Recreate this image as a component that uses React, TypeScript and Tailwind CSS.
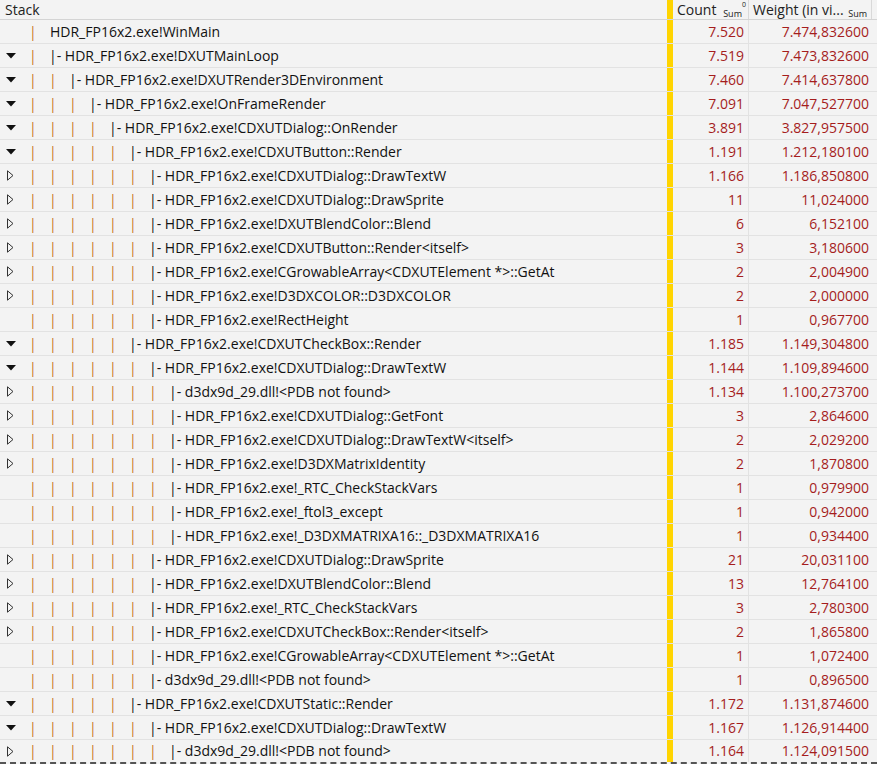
type Arrow = 'down' | 'right' | null;

type Row = {
  arrow: Arrow;
  level: number;
  name: string;
  count: string;
  weight: string;
};

const rows: Row[] = [
  { arrow: null, level: 0, name: 'HDR_FP16x2.exe!WinMain', count: '7.520', weight: '7.474,832600' },
  { arrow: 'down', level: 1, name: 'HDR_FP16x2.exe!DXUTMainLoop', count: '7.519', weight: '7.473,832600' },
  { arrow: 'down', level: 2, name: 'HDR_FP16x2.exe!DXUTRender3DEnvironment', count: '7.460', weight: '7.414,637800' },
  { arrow: 'down', level: 3, name: 'HDR_FP16x2.exe!OnFrameRender', count: '7.091', weight: '7.047,527700' },
  { arrow: 'down', level: 4, name: 'HDR_FP16x2.exe!CDXUTDialog::OnRender', count: '3.891', weight: '3.827,957500' },
  { arrow: 'down', level: 5, name: 'HDR_FP16x2.exe!CDXUTButton::Render', count: '1.191', weight: '1.212,180100' },
  { arrow: 'right', level: 6, name: 'HDR_FP16x2.exe!CDXUTDialog::DrawTextW', count: '1.166', weight: '1.186,850800' },
  { arrow: 'right', level: 6, name: 'HDR_FP16x2.exe!CDXUTDialog::DrawSprite', count: '11', weight: '11,024000' },
  { arrow: 'right', level: 6, name: 'HDR_FP16x2.exe!DXUTBlendColor::Blend', count: '6', weight: '6,152100' },
  { arrow: 'right', level: 6, name: 'HDR_FP16x2.exe!CDXUTButton::Render<itself>', count: '3', weight: '3,180600' },
  { arrow: 'right', level: 6, name: 'HDR_FP16x2.exe!CGrowableArray<CDXUTElement *>::GetAt', count: '2', weight: '2,004900' },
  { arrow: 'right', level: 6, name: 'HDR_FP16x2.exe!D3DXCOLOR::D3DXCOLOR', count: '2', weight: '2,000000' },
  { arrow: null, level: 6, name: 'HDR_FP16x2.exe!RectHeight', count: '1', weight: '0,967700' },
  { arrow: 'down', level: 5, name: 'HDR_FP16x2.exe!CDXUTCheckBox::Render', count: '1.185', weight: '1.149,304800' },
  { arrow: 'down', level: 6, name: 'HDR_FP16x2.exe!CDXUTDialog::DrawTextW', count: '1.144', weight: '1.109,894600' },
  { arrow: 'right', level: 7, name: 'd3dx9d_29.dll!<PDB not found>', count: '1.134', weight: '1.100,273700' },
  { arrow: 'right', level: 7, name: 'HDR_FP16x2.exe!CDXUTDialog::GetFont', count: '3', weight: '2,864600' },
  { arrow: 'right', level: 7, name: 'HDR_FP16x2.exe!CDXUTDialog::DrawTextW<itself>', count: '2', weight: '2,029200' },
  { arrow: 'right', level: 7, name: 'HDR_FP16x2.exe!D3DXMatrixIdentity', count: '2', weight: '1,870800' },
  { arrow: null, level: 7, name: 'HDR_FP16x2.exe!_RTC_CheckStackVars', count: '1', weight: '0,979900' },
  { arrow: null, level: 7, name: 'HDR_FP16x2.exe!_ftol3_except', count: '1', weight: '0,942000' },
  { arrow: null, level: 7, name: 'HDR_FP16x2.exe!_D3DXMATRIXA16::_D3DXMATRIXA16', count: '1', weight: '0,934400' },
  { arrow: 'right', level: 6, name: 'HDR_FP16x2.exe!CDXUTDialog::DrawSprite', count: '21', weight: '20,031100' },
  { arrow: 'right', level: 6, name: 'HDR_FP16x2.exe!DXUTBlendColor::Blend', count: '13', weight: '12,764100' },
  { arrow: 'right', level: 6, name: 'HDR_FP16x2.exe!_RTC_CheckStackVars', count: '3', weight: '2,780300' },
  { arrow: 'right', level: 6, name: 'HDR_FP16x2.exe!CDXUTCheckBox::Render<itself>', count: '2', weight: '1,865800' },
  { arrow: null, level: 6, name: 'HDR_FP16x2.exe!CGrowableArray<CDXUTElement *>::GetAt', count: '1', weight: '1,072400' },
  { arrow: null, level: 6, name: 'd3dx9d_29.dll!<PDB not found>', count: '1', weight: '0,896500' },
  { arrow: 'down', level: 5, name: 'HDR_FP16x2.exe!CDXUTStatic::Render', count: '1.172', weight: '1.131,874600' },
  { arrow: 'down', level: 6, name: 'HDR_FP16x2.exe!CDXUTDialog::DrawTextW', count: '1.167', weight: '1.126,914400' },
  { arrow: 'right', level: 7, name: 'd3dx9d_29.dll!<PDB not found>', count: '1.164', weight: '1.124,091500' },
];

function Toggle({ arrow }: { arrow: Arrow }) {
  if (arrow === 'down') {
    return (
      <svg width="10" height="6" viewBox="0 0 10 6" className="ml-[6px]">
        <path d="M0 0 H10 L5 5.5 Z" fill="#111" />
      </svg>
    );
  }
  if (arrow === 'right') {
    return (
      <svg width="7" height="11" viewBox="0 0 7 11" className="ml-[7px]">
        <path d="M0.5 0.8 L6 5.5 L0.5 10.2 Z" fill="none" stroke="#333" strokeWidth="1" />
      </svg>
    );
  }
  return null;
}

function Pipe() {
  return <span className="w-[20px] shrink-0 text-[#c9731f]">|</span>;
}

function StackCell({ row }: { row: Row }) {
  const pipes = Array.from({ length: Math.max(row.level, 1) });
  return (
    <div className="flex items-center h-full overflow-hidden whitespace-nowrap">
      <div className="w-[29px] shrink-0 flex items-center">
        <Toggle arrow={row.arrow} />
      </div>
      {pipes.map((_, i) => (
        <Pipe key={i} />
      ))}
      {row.level === 0 ? (
        <span className="ml-px text-[#111]">{row.name}</span>
      ) : (
        <span className="text-[#111]">|- {row.name}</span>
      )}
    </div>
  );
}

export default function App() {
  return (
    <div
      className="w-[877px] h-[764px] overflow-hidden bg-[#f3f3f3] text-[14px] leading-none"
      style={{ fontFamily: '"Open Sans", "Noto Sans", sans-serif' }}
    >
      {/* header */}
      <div className="grid grid-cols-[667px_6px_76px_123px_5px] h-[20px] border-b border-[#d4d4d4] text-[#222]">
        <div className="pl-[5px] flex items-center">Stack</div>
        <div className="bg-[#ffd400]" />
        <div className="flex items-center justify-between pl-[4px] pr-[2px] border-r border-[#d9d9d9]">
          <span className="leading-[18px]">Count</span>
          <span className="flex self-stretch">
            <span className="self-end text-[9px] leading-[10px]">Sum</span>
            <span className="self-start text-[7px] leading-[8px] pt-px">0</span>
          </span>
        </div>
        <div className="flex items-center justify-between pl-[4px] pr-[4px] border-r border-[#d9d9d9]">
          <span className="leading-[18px]">Weight (in vi...</span>
          <span className="self-end text-[9px] leading-[10px]">Sum</span>
        </div>
        <div />
      </div>

      {rows.map((row, i) => (
        <div
          key={i}
          className={
            'grid grid-cols-[667px_6px_76px_123px_5px] h-[24px] ' +
            (i === rows.length - 1
              ? 'border-b-2 border-dashed border-[#555]'
              : 'border-b border-[#e2e2e2]')
          }
        >
          <StackCell row={row} />
          <div className="bg-[#ffd400]" />
          <div className="flex items-center justify-end pr-[4px] border-r border-[#e2e2e2] text-[#a51d1d]">
            {row.count}
          </div>
          <div className="flex items-center justify-end pr-[3px] text-[#a51d1d]">{row.weight}</div>
          <div />
        </div>
      ))}
    </div>
  );
}
